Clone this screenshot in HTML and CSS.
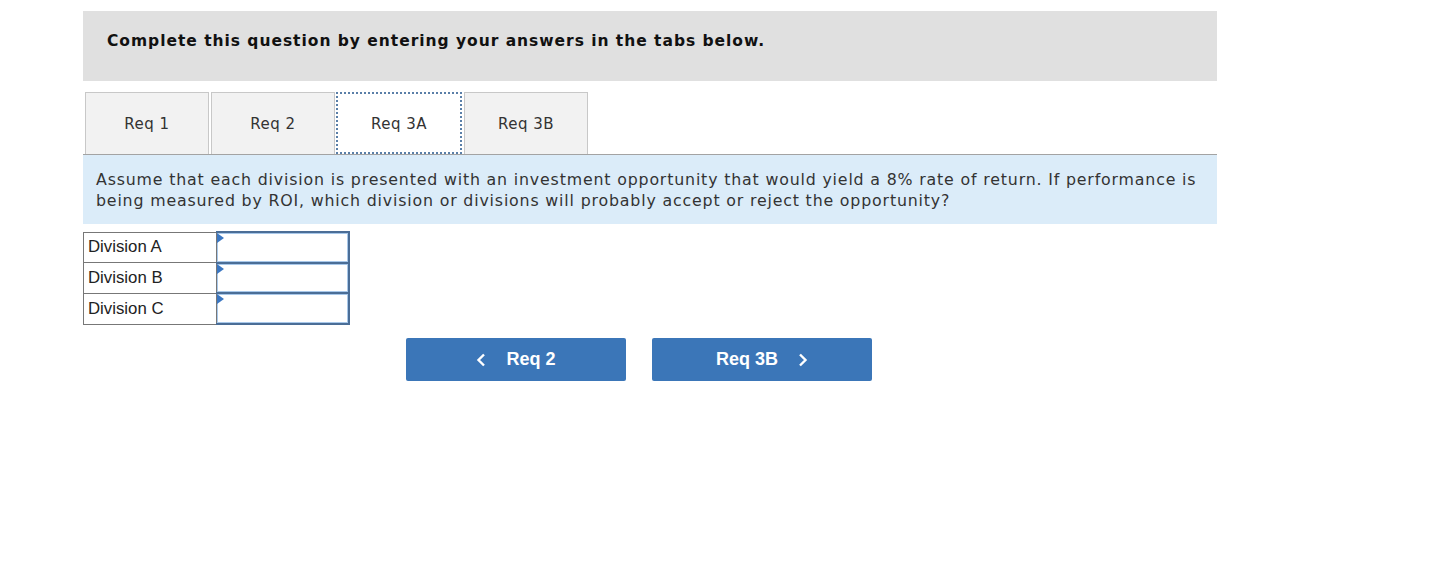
FILE: index.html
```html
<!DOCTYPE html>
<html>
<head>
<meta charset="utf-8">
<link rel="stylesheet" href="styles.css">
</head>
<body>
<div class="wrap">
  <div class="header">Complete this question by entering your answers in the tabs below.</div>
  <div class="tabs">
    <div class="tab">Req 1</div>
    <div class="tab">Req 2</div>
    <div class="tab active">Req 3A</div>
    <div class="tab">Req 3B</div>
  </div>
  <div class="prompt">Assume that each division is presented with an investment opportunity that would yield a 8% rate of return. If performance is being measured by ROI, which division or divisions will probably accept or reject the opportunity?</div>
  <table class="grid">
    <tr><td class="label">Division A</td><td class="cell"><span class="tri"></span></td></tr>
    <tr><td class="label">Division B</td><td class="cell"><span class="tri"></span></td></tr>
    <tr><td class="label">Division C</td><td class="cell"><span class="tri"></span></td></tr>
  </table>
  <div class="nav">
    <div class="btn"><svg class="chev" width="10" height="14" viewBox="0 0 10 14"><path d="M8 1.5 L2.5 7 L8 12.5" fill="none" stroke="#fff" stroke-width="2.4"/></svg><span>Req 2</span></div>
    <div class="btn"><span>Req 3B</span><svg class="chev" width="10" height="14" viewBox="0 0 10 14"><path d="M2 1.5 L7.5 7 L2 12.5" fill="none" stroke="#fff" stroke-width="2.4"/></svg></div>
  </div>
</div>
</body>
</html>
```

FILE: styles.css
```css
html, body { margin: 0; padding: 0; background: #fff; }
body { font-family: "DejaVu Sans", Verdana, sans-serif; color: #222; }
.wrap { width: 1134px; margin-left: 83px; padding-top: 11px; }
.header {
  background: #e0e0e0;
  height: 70px;
  box-sizing: border-box;
  padding: 21px 24px 0;
  font-size: 15.5px;
  font-weight: bold;
  color: #111;
  letter-spacing: 0.97px;
}
.tabs {
  display: flex;
  gap: 2px;
  margin-top: 11px;
  padding-left: 2px;
  border-bottom: 1px solid #a3a3a3;
  height: 62px;
}
.tab {
  width: 124px;
  box-sizing: border-box;
  height: 62px;
  background: #f2f2f2;
  border: 1px solid #c8c8c8;
  border-bottom: none;
  display: flex;
  align-items: center;
  justify-content: center;
  font-size: 15px;
  letter-spacing: 0.5px;
  color: #333;
  padding-top: 1px;
}
.tab.active {
  background: #fff;
  border: 2px dotted #5a7fa8;
  width: 126px;
  margin-left: -1px;
}
.prompt {
  background: #dbecf9;
  padding: 14px 13px 13px;
  font-size: 15.8px;
  line-height: 21px;
  letter-spacing: 0.83px;
  color: #333;
}
.grid {
  border-collapse: collapse;
  margin-top: 7px;
  font-family: "Liberation Sans", Arial, sans-serif;
  font-size: 16.8px;
}
.grid td { height: 30.7px; padding: 0; box-sizing: border-box; }
.label {
  width: 133px;
  border: 1px solid #777;
  padding-left: 4px !important;
  color: #222;
}
.cell {
  width: 132px;
  border: 2px solid #4b6e97;
  border-left-width: 1px;
  position: relative;
  background: #fff;
  box-shadow: inset 0 0 0 1px #a8c8ea;
}
.tri {
  position: absolute;
  left: 0;
  top: 0;
  width: 0; height: 0;
  border-top: 5px solid transparent;
  border-bottom: 5px solid transparent;
  border-left: 7px solid #3b77c2;
}
.nav {
  display: flex;
  gap: 26px;
  margin-left: 323px;
  margin-top: 13px;
}
.btn {
  width: 220px;
  height: 43px;
  background: #3b76b8;
  border-radius: 2px;
  color: #fff;
  font-family: "Liberation Sans", Arial, sans-serif;
  font-weight: bold;
  font-size: 18px;
  display: flex;
  align-items: center;
  justify-content: center;
  gap: 20px;
}
.chev { display: block; }
```
